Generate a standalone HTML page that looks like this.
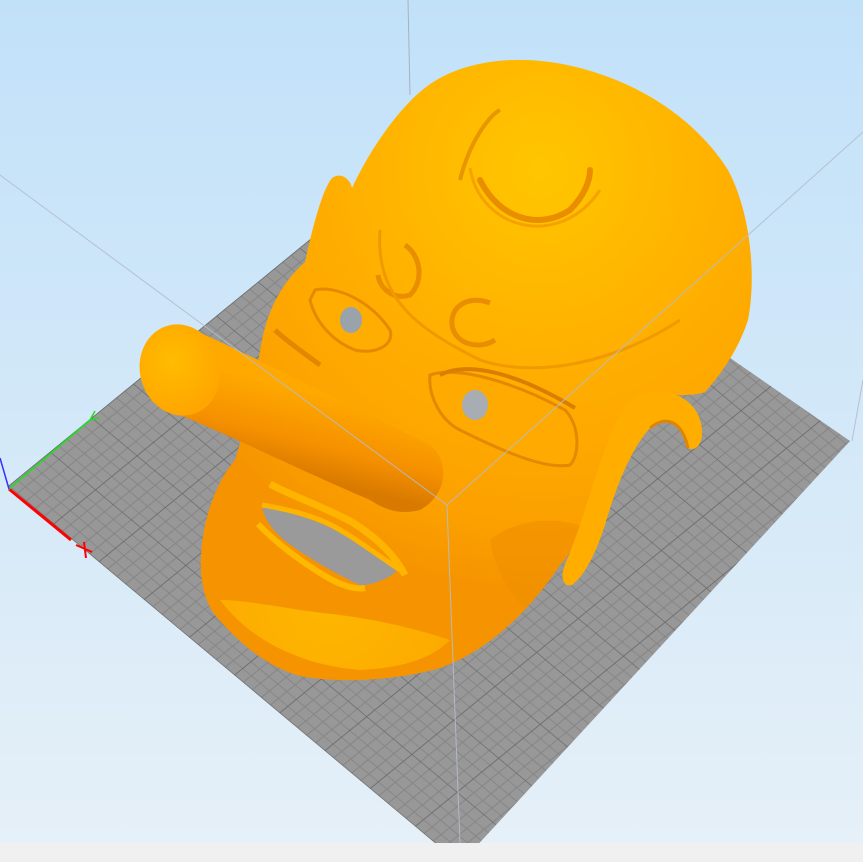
<!DOCTYPE html>
<html><head><meta charset="utf-8"><style>html,body{margin:0;padding:0;width:863px;height:862px;overflow:hidden}svg{display:block}</style></head>
<body>
<svg width="863" height="862" viewBox="0 0 863 862" xmlns="http://www.w3.org/2000/svg">
<defs>
<linearGradient id="bg" x1="0" y1="0" x2="0" y2="1"><stop offset="0" stop-color="#c1e1f9"/><stop offset="1" stop-color="#e6f0f8"/></linearGradient>
<pattern id="grid" patternUnits="userSpaceOnUse" width="0.1" height="0.1" patternTransform="matrix(452 378 416 -340 8 486)">
<rect width="1" height="1" fill="#989898"/>
<g stroke="#858585" stroke-width="0.0018" fill="none">
<path d="M0.02 0V1M0.04 0V1M0.06 0V1M0.08 0V1M0 0.02H1M0 0.04H1M0 0.06H1M0 0.08H1"/>
</g>
<path d="M0 0V1M0 0H1" stroke="#6a6a6a" stroke-width="0.003"/>
</pattern>
<radialGradient id="head" cx="540" cy="170" r="420" gradientUnits="userSpaceOnUse"><stop offset="0" stop-color="#ffc600"/><stop offset="0.45" stop-color="#ffb000"/><stop offset="0.85" stop-color="#fca000"/><stop offset="1" stop-color="#f59400"/></radialGradient>
<radialGradient id="jaw" cx="330" cy="600" r="200" gradientUnits="userSpaceOnUse"><stop offset="0" stop-color="#ffc000"/><stop offset="1" stop-color="#ffa600"/></radialGradient>
<linearGradient id="nose" x1="300" y1="390" x2="280" y2="470" gradientUnits="userSpaceOnUse"><stop offset="0" stop-color="#ffa800"/><stop offset="0.6" stop-color="#f59000"/><stop offset="1" stop-color="#d97a00"/></linearGradient>
<radialGradient id="tip" cx="175" cy="360" r="50" gradientUnits="userSpaceOnUse"><stop offset="0" stop-color="#ffbc00"/><stop offset="1" stop-color="#ffa700"/></radialGradient>
<clipPath id="hc"><path id="hp" d="M420 92C450 65 500 55 550 62C620 72 690 110 728 170C752 215 756 280 748 320C740 345 725 370 705 392C690 398 665 392 645 400C625 430 605 470 590 510C580 535 570 555 560 565C530 610 490 650 440 668C400 680 340 684 300 676C270 668 240 645 215 615C200 595 198 565 204 530C210 500 222 475 235 460C245 430 255 380 262 340C270 300 290 275 305 262C312 230 322 190 332 178C340 172 350 178 352 188C365 160 390 118 420 92Z"/></clipPath>
</defs>
<rect width="863" height="862" fill="url(#bg)"/>
<polygon points="8,486 424,146 850,441 460,864" fill="url(#grid)"/>
<rect y="843" width="863" height="19" fill="#f0f0f0"/>
<line x1="9" y1="489" x2="71" y2="540" stroke="#ff0000" stroke-width="3"/>
<path d="M76 545L92 552M84 542L86 558" stroke="#ff0000" stroke-width="2"/>
<line x1="9" y1="489" x2="90" y2="420" stroke="#22dd22" stroke-width="1.5"/>
<path d="M90 420L95 411M90 420L99 418" stroke="#22dd22" stroke-width="1.5"/>
<line x1="9" y1="489" x2="0" y2="458" stroke="#3333ff" stroke-width="1.5"/>
<line x1="408" y1="0" x2="410" y2="95" stroke="#aab0bb" stroke-width="1"/>
<path d="M420 92C450 65 500 55 550 62C620 72 690 110 728 170C752 215 756 280 748 320C740 345 725 370 705 392C690 398 665 392 645 400C625 430 605 470 590 510C580 535 570 555 560 565C530 610 490 650 440 668C400 680 340 684 300 676C270 668 240 645 215 615C200 595 198 565 204 530C210 500 222 475 235 460C245 430 255 380 262 340C270 300 290 275 305 262C312 230 322 190 332 178C340 172 350 178 352 188C365 160 390 118 420 92Z" fill="url(#head)"/>
<g clip-path="url(#hc)">
<path d="M490 540C520 515 570 515 600 535C590 570 570 600 540 625C515 600 495 575 490 540Z" fill="#f09000" opacity="0.6"/>
<path d="M220 600C250 640 300 665 360 670C400 668 430 660 450 640C420 630 380 620 340 615C290 610 250 600 220 600Z" fill="url(#jaw)" opacity="0.8"/>
</g>
<path d="M640 395C670 385 700 400 702 430C703 445 695 452 688 448C682 420 665 415 650 428C630 450 615 490 605 525C595 555 585 575 572 585C562 588 560 575 566 562C580 530 590 490 605 450C615 420 625 400 640 395Z" fill="#ffae00"/>
<path d="M650 428C665 415 682 420 688 448" stroke="#e08500" stroke-width="3" fill="none"/>
<path d="M460 180C470 140 490 115 500 110" stroke="#e89600" stroke-width="4" fill="none"/>
<path d="M480 180C500 220 540 230 570 210C585 195 590 180 590 170" stroke="#e88e00" stroke-width="6" fill="none" stroke-linecap="round"/>
<path d="M470 168C480 230 560 250 600 190" stroke="#f5a200" stroke-width="3" fill="none"/>
<path d="M405 245C420 255 425 280 410 295C395 300 380 290 378 275" stroke="#e88e00" stroke-width="5" fill="none"/>
<path d="M490 303C470 295 450 305 452 325C455 345 480 350 495 340" stroke="#e88e00" stroke-width="5" fill="none"/>
<path d="M380 230C375 300 420 330 480 360C540 380 620 360 680 320" stroke="#f09a00" stroke-width="3" fill="none"/>
<path d="M315 290C335 285 370 300 390 330C395 345 375 355 355 350C330 340 315 320 310 300Z" fill="#ffad00" stroke="#e58a00" stroke-width="3"/>
<path d="M430 375C460 365 520 385 565 410C580 425 580 455 570 465C545 470 500 450 460 430C440 420 428 395 430 375Z" fill="#ffaa00" stroke="#e38800" stroke-width="3"/>
<path d="M440 375C470 360 520 375 575 408" stroke="#d97e00" stroke-width="4" fill="none"/>
<ellipse cx="351" cy="320" rx="11" ry="13" fill="#9aa2ab"/>
<ellipse cx="475" cy="405" rx="13" ry="15" fill="#a7adb3"/>
<path d="M275 330C285 340 300 350 320 365" stroke="#e18700" stroke-width="5" fill="none"/>
<path d="M262 507C280 510 300 515 320 523C345 533 370 552 398 570C390 578 372 586 360 585C338 575 312 560 292 546C277 536 265 522 262 507Z" fill="#9a9a9a"/>
<path d="M262 505C280 508 300 512 320 520C345 530 370 550 400 570" stroke="#ffb400" stroke-width="5" fill="none"/>
<path d="M258 524C275 542 300 561 325 576C340 585 355 590 365 588" stroke="#ffb800" stroke-width="6" fill="none"/>
<path d="M270 484C292 496 322 506 352 522C380 540 395 556 405 575" stroke="#ffb400" stroke-width="7" fill="none"/>
<path d="M235 520C240 560 280 590 330 605" stroke="#f39400" stroke-width="5" fill="none"/>
<path d="M190 328C260 360 340 400 430 445C450 460 448 495 420 510C400 515 385 510 370 500C300 470 240 440 180 415Z" fill="url(#nose)"/>
<ellipse cx="180" cy="370" rx="40" ry="46" transform="rotate(-15 180 370)" fill="url(#tip)"/>
<g stroke="#b4bccc" stroke-width="1" fill="none" opacity="0.9">
<line x1="0" y1="175" x2="447" y2="505"/>
<line x1="447" y1="505" x2="863" y2="132"/>
<line x1="447" y1="505" x2="460" y2="843"/>
<line x1="863" y1="380" x2="852" y2="441"/>
</g>
</svg>
</body></html>
